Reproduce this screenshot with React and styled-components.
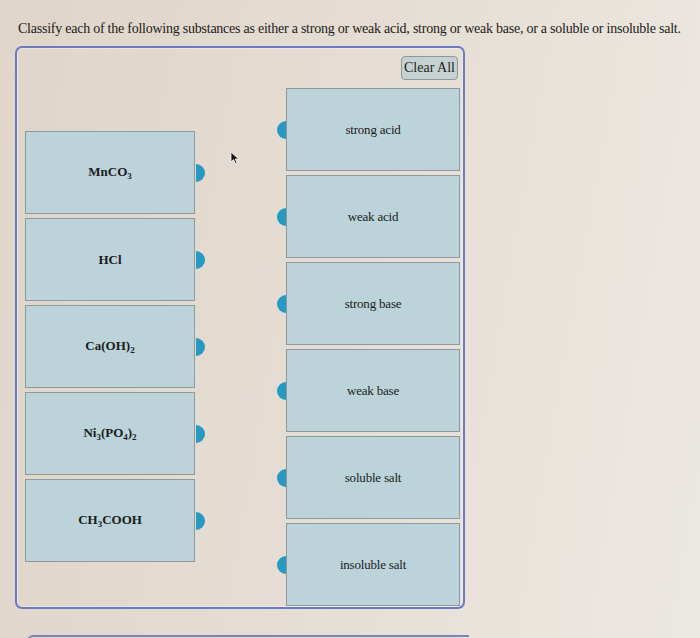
import styled, { createGlobalStyle } from "styled-components";

const GlobalStyle = createGlobalStyle`
  html, body {
    margin: 0;
    padding: 0;
    height: 100%;
    overflow: hidden;
  }
  body {
    background: linear-gradient(100deg, #dfd5c9 0%, #e5ddd3 45%, #ece8e2 100%);
    font-family: "Liberation Serif", "Times New Roman", serif;
    color: #1b1b1b;
  }
`;

const Sub = styled.sub`
  font-size: 9px;
  vertical-align: -3px;
`;

const substances = [
  { key: "mnco3", label: <>MnCO<Sub>3</Sub></> },
  { key: "hcl", label: <>HCl</> },
  { key: "caoh2", label: <>Ca(OH)<Sub>2</Sub></> },
  { key: "ni3po42", label: <>Ni<Sub>3</Sub>(PO<Sub>4</Sub>)<Sub>2</Sub></> },
  { key: "ch3cooh", label: <>CH<Sub>3</Sub>COOH</> },
];

const categories = [
  "strong acid",
  "weak acid",
  "strong base",
  "weak base",
  "soluble salt",
  "insoluble salt",
];

export default function App() {
  return (
    <>
      <GlobalStyle />
      <Page>
        <Prompt>
          Classify each of the following substances as either a strong or weak acid, strong or
          weak base, or a soluble or insoluble salt.
        </Prompt>

        <Board>
          <SourceColumn>
            {substances.map((s) => (
              <Slot key={s.key}>
                <Card $bold>
                  <span>{s.label}</span>
                </Card>
                <Tab $side="right" />
              </Slot>
            ))}
          </SourceColumn>

          <TargetColumn>
            <ClearButton>Clear All</ClearButton>
            <TargetList>
              {categories.map((c) => (
                <Slot key={c}>
                  <Tab $side="left" />
                  <Card $wide>{c}</Card>
                </Slot>
              ))}
            </TargetList>
          </TargetColumn>

          <Pointer viewBox="0 0 10 14">
            <path d="M1 1 L1 11 L3.6 8.6 L5.4 12.6 L7 11.9 L5.3 8 L8.6 8 Z" fill="#111" stroke="#fff" strokeWidth="0.8" />
          </Pointer>
        </Board>

        <NextPanel />
      </Page>
    </>
  );
}

const Page = styled.div`
  padding: 20px 0 0 0;
`;

const Prompt = styled.p`
  margin: 0 0 0 18px;
  font-size: 14px;
  line-height: 18px;
  letter-spacing: -0.24px;
  white-space: nowrap;
`;

const Board = styled.div`
  position: relative;
  box-sizing: border-box;
  margin: 8px 0 0 15px;
  width: 450px;
  height: 563px;
  border: 2px solid #6c79c4;
  border-radius: 7px;
  box-shadow: inset 0 0 0 1px rgba(255, 255, 255, 0.35);
  padding: 8px 3px 0 8px;
  display: flex;
  justify-content: space-between;
`;

const SourceColumn = styled.div`
  display: flex;
  flex-direction: column;
  gap: 4px;
  padding-top: 75px;
`;

const TargetColumn = styled.div`
  display: flex;
  flex-direction: column;
  align-items: flex-end;
`;

const TargetList = styled.div`
  display: flex;
  flex-direction: column;
  gap: 4px;
  margin-top: 8px;
`;

const Slot = styled.div`
  display: flex;
  align-items: center;
`;

const ClearButton = styled.button`
  box-sizing: border-box;
  width: 57px;
  height: 24px;
  margin-right: 2px;
  padding: 0;
  background: #c6d1d1;
  border: 1px solid #8d9898;
  border-radius: 4px;
  font-family: "Liberation Serif", "Times New Roman", serif;
  font-size: 14px;
  color: #1e1e1e;
`;

const Card = styled.div`
  box-sizing: border-box;
  width: ${({ $wide }) => ($wide ? "174px" : "170px")};
  height: 83px;
  background: #bdd3da;
  border: 1px solid #8c9a9b;
  display: flex;
  align-items: center;
  justify-content: center;
  font-size: 13px;
  font-weight: ${({ $bold }) => ($bold ? 700 : 400)};
  letter-spacing: ${({ $bold }) => ($bold ? "0" : "-0.2px")};
`;

const Tab = styled.span`
  flex: none;
  width: 9px;
  height: 18px;
  background: #2899c1;
  border-radius: ${({ $side }) => ($side === "right" ? "0 9px 9px 0" : "9px 0 0 9px")};
  margin-left: ${({ $side }) => ($side === "right" ? "1px" : "0")};
`;

const Pointer = styled.svg`
  position: absolute;
  left: 213px;
  top: 103px;
  width: 10px;
  height: 14px;
`;

const NextPanel = styled.div`
  margin: 26px 0 0 27px;
  width: 440px;
  height: 20px;
  border-top: 2px solid #7b84b6;
  border-left: 2px solid #7b84b6;
  border-radius: 6px 0 0 0;
`;
